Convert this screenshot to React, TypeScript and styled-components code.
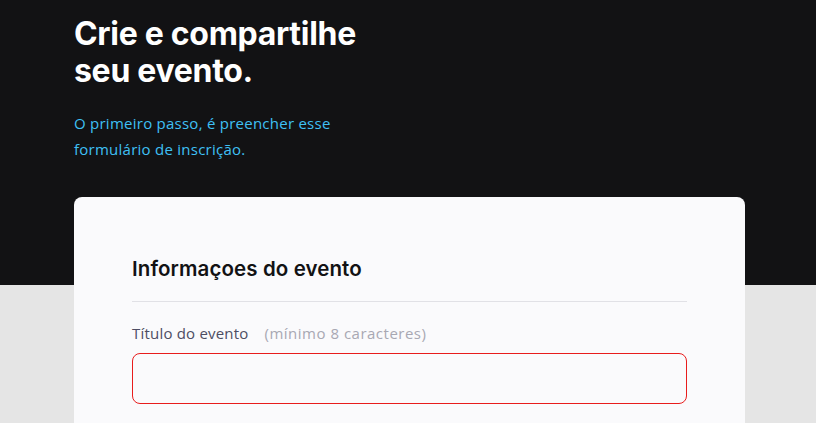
import React from "react";
import styled, { createGlobalStyle } from "styled-components";

const Global = createGlobalStyle`
  * { box-sizing: border-box; }
  html, body { margin: 0; padding: 0; }
  body {
    background: #e5e5e5;
    font-family: "Open Sans", "Noto Sans", sans-serif;
    -webkit-font-smoothing: antialiased;
  }
`;

const Page = styled.div`
  min-height: 423px;
  background: linear-gradient(to bottom, #121214 0, #121214 285px, #e5e5e5 285px);
  padding: 0 71px 0 74px;
`;

const Hero = styled.header`
  padding-top: 15px;
  padding-bottom: 35px;
`;

const Title = styled.h1`
  margin: 0;
  width: 300px;
  font-family: "Inter", "Liberation Sans", sans-serif;
  font-weight: 700;
  font-size: 32px;
  line-height: 37px;
  letter-spacing: -0.3px;
  color: #ffffff;
`;

const Subtitle = styled.p`
  margin: 21px 0 0;
  width: 300px;
  font-size: 15px;
  line-height: 26px;
  letter-spacing: 0.25px;
  color: #3fc0f5;
`;

const Card = styled.section`
  background: #fafafc;
  border-radius: 8px;
  padding: 58px 58px 40px;
  min-height: 240px;
`;

const CardTitle = styled.h2`
  margin: 0;
  padding-bottom: 18px;
  border-bottom: 1px solid #e1e1e6;
  font-family: "Inter", "Liberation Sans", sans-serif;
  font-weight: 600;
  font-size: 20.5px;
  line-height: 28px;
  letter-spacing: 0.1px;
  color: #121214;
`;

const Field = styled.div`
  margin-top: 20px;
  display: flex;
  flex-direction: column;
  gap: 9px;
`;

const Label = styled.label`
  display: flex;
  gap: 16px;
  font-size: 15px;
  line-height: 22px;
  letter-spacing: 0.2px;
  color: #4d4d63;
`;

const Hint = styled.span`
  color: #a8a8b3;
  letter-spacing: 0.5px;
`;

const Input = styled.input`
  height: 51px;
  width: 100%;
  border: 1px solid #e81c1c;
  border-radius: 8px;
  background: #fafafc;
  padding: 0 16px;
  font-size: 15px;
  font-family: inherit;
  outline: none;
`;

export default function App() {
  return (
    <>
      <Global />
      <Page>
        <Hero>
          <Title>Crie e compartilhe seu evento.</Title>
          <Subtitle>O primeiro passo, é preencher esse formulário de inscrição.</Subtitle>
        </Hero>
        <Card>
          <CardTitle>Informaçoes do evento</CardTitle>
          <Field>
            <Label htmlFor="titulo">
              Título do evento <Hint>(mínimo 8 caracteres)</Hint>
            </Label>
            <Input id="titulo" type="text" />
          </Field>
        </Card>
      </Page>
    </>
  );
}
